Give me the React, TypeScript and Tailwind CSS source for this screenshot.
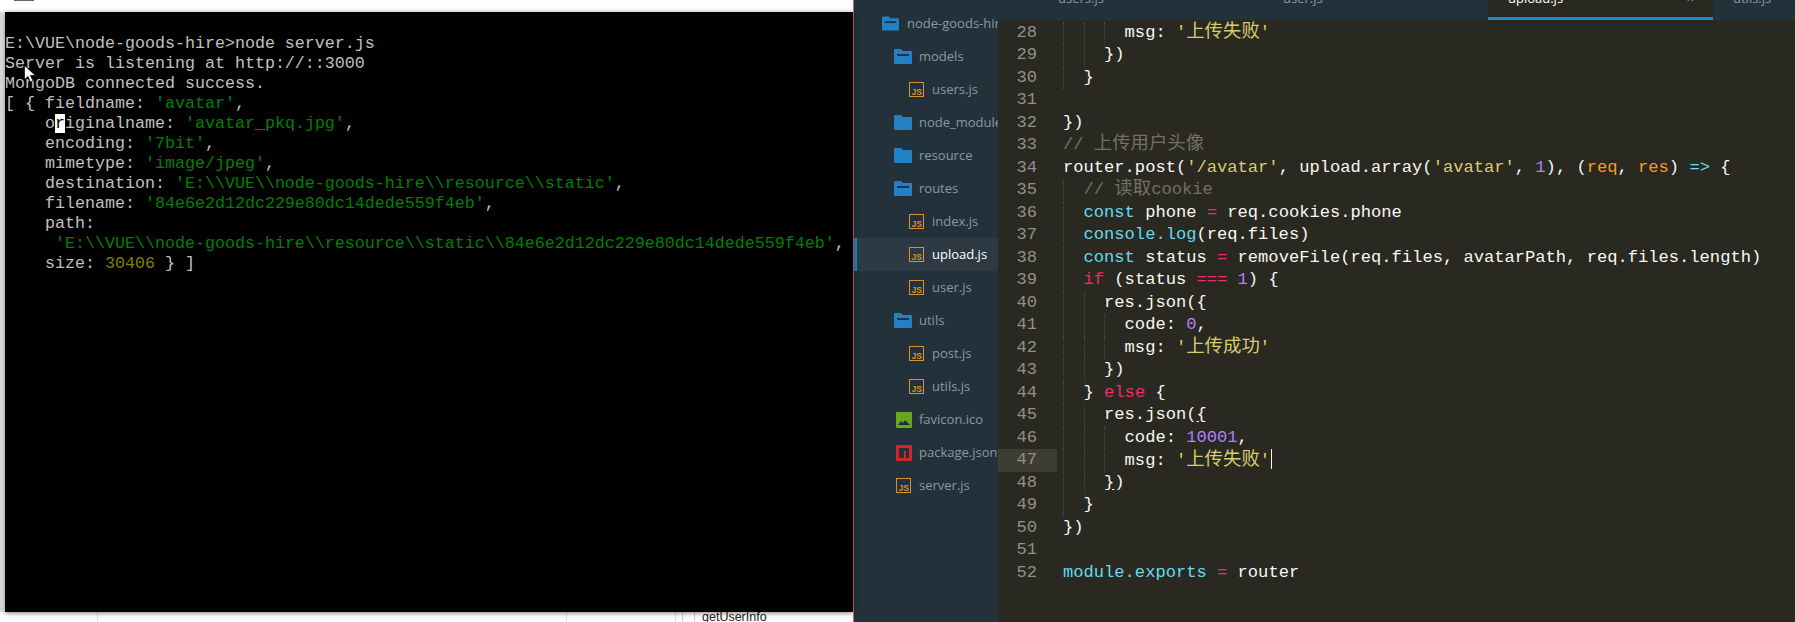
import React from "react";

const G = "text-[#c0c0c0]";
const S = "text-[#008000]";
const Y = "text-[#808000]";

type Seg = [string, string];
const consoleLines: Seg[][] = [
  [["E:\\VUE\\node-goods-hire>node server.js", G]],
  [["Server is listening at http://::3000", G]],
  [["MongoDB connected success.", G]],
  [["[ { fieldname: ", G], ["'avatar'", S], [",", G]],
  [["    o", G], ["r", "bg-white text-black"], ["iginalname: ", G], ["'avatar_pkq.jpg'", S], [",", G]],
  [["    encoding: ", G], ["'7bit'", S], [",", G]],
  [["    mimetype: ", G], ["'image/jpeg'", S], [",", G]],
  [["    destination: ", G], ["'E:\\\\VUE\\\\node-goods-hire\\\\resource\\\\static'", S], [",", G]],
  [["    filename: ", G], ["'84e6e2d12dc229e80dc14dede559f4eb'", S], [",", G]],
  [["    path:", G]],
  [["     ", G], ["'E:\\\\VUE\\\\node-goods-hire\\\\resource\\\\static\\\\84e6e2d12dc229e80dc14dede559f4eb'", S], [",", G]],
  [["    size: ", G], ["30406", Y], [" } ]", G]],
];

const W = "text-[#f8f8f2]";
const STR = "text-[#d9cd6c]";
const KW = "text-[#f02a6c]";
const CY = "text-[#66d9ef]";
const NUM = "text-[#ae81ff]";
const PAR = "text-[#fd971f]";
const COM = "text-[#75715e]";
const CJK = "font-['Noto_Sans_CJK_SC'] text-[18.4px] leading-[0]";
const UL = "underline underline-offset-2";

type Line = { n: number; guides: number; active?: boolean; t: Seg[] };
const w = (s: string): Seg => [s, W];
const code: Line[] = [
  { n: 28, guides: 3, t: [w("msg: "), ["'", STR], ["上传失败", `${STR} ${CJK}`], ["'", STR]] },
  { n: 29, guides: 2, t: [w("})")] },
  { n: 30, guides: 1, t: [w("}")] },
  { n: 31, guides: 0, t: [] },
  { n: 32, guides: 0, t: [w("})")] },
  { n: 33, guides: 0, t: [["// ", COM], ["上传用户头像", `${COM} ${CJK}`]] },
  { n: 34, guides: 0, t: [w("router.post("), ["'/avatar'", STR], w(", upload.array("), ["'avatar'", STR], w(", "), ["1", NUM], w("), ("), ["req", PAR], w(", "), ["res", PAR], w(") "), ["=>", CY], w(" {")] },
  { n: 35, guides: 1, t: [["// ", COM], ["读取", `${COM} ${CJK}`], ["cookie", COM]] },
  { n: 36, guides: 1, t: [["const", CY], w(" phone "), ["=", KW], w(" req.cookies.phone")] },
  { n: 37, guides: 1, t: [["console.log", CY], w("(req.files)")] },
  { n: 38, guides: 1, t: [["const", CY], w(" status "), ["=", KW], w(" removeFile(req.files, avatarPath, req.files.length)")] },
  { n: 39, guides: 1, t: [["if", KW], w(" (status "), ["===", KW], w(" "), ["1", NUM], w(") {")] },
  { n: 40, guides: 2, t: [w("res.json({")] },
  { n: 41, guides: 3, t: [w("code: "), ["0", NUM], w(",")] },
  { n: 42, guides: 3, t: [w("msg: "), ["'", STR], ["上传成功", `${STR} ${CJK}`], ["'", STR]] },
  { n: 43, guides: 2, t: [w("})")] },
  { n: 44, guides: 1, t: [w("} "), ["else", KW], w(" {")] },
  { n: 45, guides: 2, t: [w("res.json("), ["{", `${W} ${UL}`]] },
  { n: 46, guides: 3, t: [w("code: "), ["10001", NUM], w(",")] },
  { n: 47, guides: 3, active: true, t: [w("msg: "), ["'", STR], ["上传失败", `${STR} ${CJK}`], ["'", STR]] },
  { n: 48, guides: 2, t: [["}", `${W} ${UL}`], w(")")] },
  { n: 49, guides: 1, t: [w("}")] },
  { n: 50, guides: 0, t: [w("})")] },
  { n: 51, guides: 0, t: [] },
  { n: 52, guides: 0, t: [["module.exports", CY], w(" "), ["=", KW], w(" router")] },
];

function FolderOpen({ className }: { className: string }) {
  return (
    <svg viewBox="0 0 18 15" className={className}>
      <path d="M0 1a1 1 0 0 1 1-1h6l2 2h8a1 1 0 0 1 1 1v11a1 1 0 0 1-1 1H1a1 1 0 0 1-1-1z" fill="#2181c4" />
      <rect x="3" y="5" width="12" height="2" fill="#1d3446" />
    </svg>
  );
}
function Folder({ className }: { className: string }) {
  return (
    <svg viewBox="0 0 18 15" className={className}>
      <path d="M0 1a1 1 0 0 1 1-1h6l2 2h8a1 1 0 0 1 1 1v11a1 1 0 0 1-1 1H1a1 1 0 0 1-1-1z" fill="#2181c4" />
    </svg>
  );
}
function Js() {
  return (
    <svg viewBox="0 0 15 15" className="w-[15px] h-[15px]">
      <rect x="0.5" y="0.5" width="14" height="14" fill="none" stroke="#d9922e" />
      <text x="13" y="12.5" textAnchor="end" fontSize="8.5" fontWeight="700" fill="#d9922e" fontFamily="Liberation Sans, sans-serif">JS</text>
    </svg>
  );
}
function Img() {
  return (
    <svg viewBox="0 0 16 16" className="w-[16px] h-[16px]">
      <rect width="16" height="16" rx="1" fill="#65a81e" />
      <path d="M2 13l3-4 2 2 2-3 5 5z" fill="#1f3038" />
    </svg>
  );
}
function Npm() {
  return (
    <svg viewBox="0 0 16 16" className="w-[16px] h-[16px]">
      <rect width="16" height="16" rx="1" fill="#d3262c" />
      <path d="M3 3h10v10h-3V6H8v7H3z" fill="#22313a" />
    </svg>
  );
}

type Item = { label: string; icon: React.ReactNode; pad: string; gap: string; selected?: boolean };
const items: Item[] = [
  { label: "node-goods-hire", icon: <FolderOpen className="w-[17px] h-[15px]" />, pad: "pl-[25px]", gap: "gap-2" },
  { label: "models", icon: <FolderOpen className="w-[18px] h-[15px]" />, pad: "pl-[37px]", gap: "gap-[7px]" },
  { label: "users.js", icon: <Js />, pad: "pl-[52px]", gap: "gap-2" },
  { label: "node_modules", icon: <Folder className="w-[18px] h-[15px]" />, pad: "pl-[37px]", gap: "gap-[7px]" },
  { label: "resource", icon: <Folder className="w-[18px] h-[15px]" />, pad: "pl-[37px]", gap: "gap-[7px]" },
  { label: "routes", icon: <FolderOpen className="w-[18px] h-[15px]" />, pad: "pl-[37px]", gap: "gap-[7px]" },
  { label: "index.js", icon: <Js />, pad: "pl-[52px]", gap: "gap-2" },
  { label: "upload.js", icon: <Js />, pad: "pl-[52px]", gap: "gap-2", selected: true },
  { label: "user.js", icon: <Js />, pad: "pl-[52px]", gap: "gap-2" },
  { label: "utils", icon: <FolderOpen className="w-[18px] h-[15px]" />, pad: "pl-[37px]", gap: "gap-[7px]" },
  { label: "post.js", icon: <Js />, pad: "pl-[52px]", gap: "gap-2" },
  { label: "utils.js", icon: <Js />, pad: "pl-[52px]", gap: "gap-2" },
  { label: "favicon.ico", icon: <Img />, pad: "pl-[39px]", gap: "gap-[7px]" },
  { label: "package.json", icon: <Npm />, pad: "pl-[39px]", gap: "gap-[7px]" },
  { label: "server.js", icon: <Js />, pad: "pl-[39px]", gap: "gap-[8px]" },
];

const tabs = ["users.js", "user.js", "upload.js", "utils.js"];

export default function App() {
  return (
    <div className="flex w-[1795px] h-[622px] overflow-hidden bg-white">
      {/* console window over a browser page */}
      <div className="w-[853px] h-full flex flex-col shrink-0">
        <div className="h-[12px] pl-[14px] shrink-0 bg-white">
          <div className="w-[20px] h-[1px] bg-[#666666]" />
        </div>
        <div className="flex h-[600px] shrink-0">
          <div className="w-[5px] bg-gradient-to-r from-[#d8d8d8] to-[#f0f0f0]" />
          <div className="relative z-10 flex-1 bg-black pt-[22px] shadow-[0_1px_5px_rgba(0,0,0,0.5)] font-['Liberation_Mono'] text-[16.67px] leading-[20px] whitespace-pre">
            {consoleLines.map((line, i) => (
              <div key={i} className="h-[20px]">
                {line.map(([s, c], j) => (
                  <span key={j} className={c}>{s}</span>
                ))}
              </div>
            ))}
            <svg viewBox="0 0 13 18" className="absolute left-[19px] top-[53px] w-[13px] h-[18px]">
              <path d="M0.5 0.5V14.5L4 11.5L6.5 17L9 16L6.5 10.5H11.5z" fill="#fff" stroke="#000" strokeWidth="0.7" />
            </svg>
          </div>
        </div>
        <div className="flex-1 flex bg-white">
          <div className="w-[98px] h-full border-r border-[#dddddd]" />
          <div className="w-[469px] h-full border-r border-[#dddddd]" />
          <div className="w-[109px] h-full border-r border-[#dddddd]" />
          <div className="w-[7px] h-full border-r border-[#cccccc]" />
          <div className="w-[12px] h-full border-r border-[#cccccc]" />
          <div className="pl-[7px] font-['Liberation_Sans'] text-[12.5px] leading-[10px] text-[#222222] h-full overflow-hidden">getUserInfo</div>
        </div>
      </div>

      {/* sidebar */}
      <div className="w-[145px] h-full shrink-0 border-l border-[#d8636f] bg-[#22313a] pt-[7px] overflow-hidden font-['Open_Sans'] text-[13px]">
        {items.map((it) => (
          <div
            key={it.label}
            className={`h-[33px] flex items-center whitespace-nowrap border-l-[3px] ${it.pad} ${it.gap} ${
              it.selected ? "border-[#2181c4] bg-[#2d3a44] text-white" : "border-transparent text-[#8a99a3]"
            }`}
          >
            <span className="shrink-0 flex">{it.icon}</span>
            <span>{it.label}</span>
          </div>
        ))}
      </div>

      {/* editor */}
      <div className="flex-1 h-full flex flex-col bg-[#292922] min-w-0">
        <div className="h-[20px] shrink-0 flex bg-[#22313a] overflow-hidden font-['Open_Sans'] text-[13px] leading-[20px]">
          <div className="w-[40px] shrink-0 flex gap-[9px] pl-[9px] text-[#8a99a3] -mt-[12px] font-['Liberation_Mono']">
            <span>&lt;</span>
            <span>&gt;</span>
          </div>
          {tabs.map((t) => (
            <div
              key={t}
              className={`w-[225px] h-[20px] shrink-0 pl-[20px] pr-[19px] flex justify-between ${
                t === "upload.js" ? "bg-[#292922] border-b-[3px] border-[#2188d0] text-white" : "text-[#8a99a3]"
              }`}
            >
              <span className="-mt-[12px]">{t}</span>
              {t === "upload.js" && <span className="-mt-[12px] text-[#8a99a3]">×</span>}
            </div>
          ))}
        </div>
        <div className="pt-[1.5px] font-['Liberation_Mono'] text-[17.12px] leading-[22.5px] whitespace-pre">
          {code.map((l) => (
            <div key={l.n} className="flex h-[22.5px]">
              <div className={`w-[59px] shrink-0 pr-[20px] text-right text-[#8f908a] ${l.active ? "bg-[#3e3d32]" : ""}`}>{l.n}</div>
              <div className="pl-[6px] flex items-stretch">
                {Array.from({ length: l.guides }).map((_, i) => (
                  <div key={i} className="w-[20.54px] border-l border-dotted border-[#4c4c44]" />
                ))}
                <div>
                  {l.t.map(([s, c], j) => (
                    <span key={j} className={c}>{s}</span>
                  ))}
                  {l.active && <span className="inline-block w-[1px] h-[20px] bg-[#f8f8f0] align-[-4px] ml-[1px]" />}
                </div>
              </div>
            </div>
          ))}
        </div>
      </div>
    </div>
  );
}
